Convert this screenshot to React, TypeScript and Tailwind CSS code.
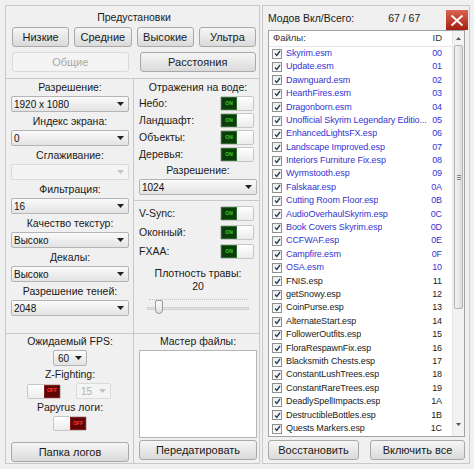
import React from "react";

const MODS: [string, string, boolean][] = [
  ["Skyrim.esm", "00", true],
  ["Update.esm", "01", true],
  ["Dawnguard.esm", "02", true],
  ["HearthFires.esm", "03", true],
  ["Dragonborn.esm", "04", true],
  ["Unofficial Skyrim Legendary Editio...", "05", true],
  ["EnhancedLightsFX.esp", "06", true],
  ["Landscape Improved.esp", "07", true],
  ["Interiors Furniture Fix.esp", "08", true],
  ["Wyrmstooth.esp", "09", true],
  ["Falskaar.esp", "0A", true],
  ["Cutting Room Floor.esp", "0B", true],
  ["AudioOverhaulSkyrim.esp", "0C", true],
  ["Book Covers Skyrim.esp", "0D", true],
  ["CCFWAF.esp", "0E", true],
  ["Campfire.esm", "0F", true],
  ["OSA.esm", "10", true],
  ["FNIS.esp", "11", false],
  ["getSnowy.esp", "12", false],
  ["CoinPurse.esp", "13", false],
  ["AlternateStart.esp", "14", false],
  ["FollowerOutfits.esp", "15", false],
  ["FloraRespawnFix.esp", "16", false],
  ["Blacksmith Chests.esp", "17", false],
  ["ConstantLushTrees.esp", "18", false],
  ["ConstantRareTrees.esp", "19", false],
  ["DeadlySpellImpacts.esp", "1A", false],
  ["DestructibleBottles.esp", "1B", false],
  ["Quests Markers.esp", "1C", false],
];

const LEFT_SELECTS: [string, string, boolean][] = [
  ["Разрешение:", "1920 x 1080", false],
  ["Индекс экрана:", "0", false],
  ["Сглаживание:", "", true],
  ["Фильтрация:", "16", false],
  ["Качество текстур:", "Высоко", false],
  ["Декалы:", "Высоко", false],
  ["Разрешение теней:", "2048", false],
];

function Btn({ children, className = "", disabled = false }: { children: React.ReactNode; className?: string; disabled?: boolean }) {
  return (
    <div
      className={`flex h-[20px] items-center justify-center rounded-[3px] border text-[11px] ${
        disabled
          ? "border-[#dadada] bg-[#f4f4f4] text-[#a8a8a8]"
          : "border-[#a9a9a9] bg-gradient-to-b from-[#f6f6f6] to-[#dadada] text-[#1a1a1a]"
      } ${className}`}
    >
      {children}
    </div>
  );
}

function Arrow({ light = false }: { light?: boolean }) {
  return (
    <svg width="7" height="4" viewBox="0 0 7 4" className="shrink-0">
      <path d="M0 0h7L3.5 4z" fill={light ? "#c4c4c4" : "#222"} />
    </svg>
  );
}

function Select({ value, className = "", disabled = false }: { value: string; className?: string; disabled?: boolean }) {
  return (
    <div
      className={`flex h-[16px] items-center justify-between rounded-[2px] border pl-[2px] pr-[4px] text-[10px] ${
        disabled
          ? "border-[#dadada] bg-[#f4f4f4] text-[#b0b0b0]"
          : "border-[#b4b4b4] bg-gradient-to-b from-[#fafafa] to-[#e3e3e3] text-[#111]"
      } ${className}`}
    >
      <span>{value}</span>
      <Arrow light={disabled} />
    </div>
  );
}

function Toggle({ on }: { on: boolean }) {
  const knob = <div className="h-full w-[17px] bg-gradient-to-b from-[#ffffff] to-[#ebebeb]" />;
  return (
    <div className="flex h-[15px] w-[34px] shrink-0 overflow-hidden rounded-[2px] border border-[#c6c6c6]">
      {on ? (
        <>
          <div className="flex h-full w-[17px] items-center justify-center border border-[#2a6a2a] bg-[#0b3d0b] text-[5px] font-bold text-[#3fc93f]">ON</div>
          {knob}
        </>
      ) : (
        <>
          {knob}
          <div className="flex h-full w-[17px] items-center justify-center border border-[#8a1a1a] bg-[#5e0505] text-[5px] font-bold text-[#ff3a3a]">OFF</div>
        </>
      )}
    </div>
  );
}

function Label({ children, className = "" }: { children: React.ReactNode; className?: string }) {
  return <div className={`flex h-[16px] items-center justify-center whitespace-nowrap text-[10.5px] text-[#1a1a1a] ${className}`}>{children}</div>;
}

function ToggleRow({ label }: { label: string }) {
  return (
    <div className="flex h-[15px] items-center justify-between pr-[3px] text-[10.5px] text-[#1a1a1a]">
      <span>{label}</span>
      <Toggle on />
    </div>
  );
}

function Check() {
  return (
    <div className="flex h-[10px] w-[10px] shrink-0 items-center justify-center border border-[#8e8f8f] bg-gradient-to-b from-[#ececec] to-[#ffffff]">
      <svg width="7" height="7" viewBox="0 0 7 7">
        <path d="M1 3.5l1.8 2L6 1" fill="none" stroke="#2a3b5c" strokeWidth="1.3" />
      </svg>
    </div>
  );
}

export default function App() {
  return (
    <div
      className="flex h-[469px] w-[474px] gap-[2px] bg-[#f0f0f0] py-[5px] pl-[5px] pr-[4px]"
      style={{ fontFamily: '"Liberation Sans", Arial, sans-serif' }}
    >
      {/* left panel */}
      <div className="flex w-[255px] shrink-0 flex-col border border-[#c9c9c9]">
        <div className="flex h-[72px] flex-col pl-[6px] pr-[3px] pt-[5px]">
          <div className="flex h-[14px] items-center justify-center text-[10.5px] text-[#1a1a1a]">Предустановки</div>
          <div className="mt-[2px] grid grid-cols-4 gap-[5px]">
            <Btn>Низкие</Btn>
            <Btn>Средние</Btn>
            <Btn>Высокие</Btn>
            <Btn>Ультра</Btn>
          </div>
          <div className="mt-[5px] grid grid-cols-2 gap-[11px]">
            <Btn disabled>Общие</Btn>
            <Btn>Расстояния</Btn>
          </div>
        </div>

        <div className="flex h-[255px] border-t border-[#c9c9c9]">
          <div className="flex w-[128px] flex-col gap-[2px] border-r border-[#c9c9c9] pl-[5px] pr-[4px] pt-[1px]">
            {LEFT_SELECTS.map(([l, v, d]) => (
              <div key={l} className="flex flex-col">
                <Label>{l}</Label>
                <Select value={v} disabled={d} />
              </div>
            ))}
          </div>
          <div className="flex flex-1 flex-col">
            <div className="flex flex-col pl-[5px] pr-[2px] pt-[1px]">
              <Label>Отражения на воде:</Label>
              <div className="flex flex-col gap-[2px]">
                <ToggleRow label="Небо:" />
                <ToggleRow label="Ландшафт:" />
                <ToggleRow label="Объекты:" />
                <ToggleRow label="Деревья:" />
              </div>
              <Label className="mt-[1px]">Разрешение:</Label>
              <Select value="1024" />
            </div>
            <div className="mt-[5px] flex flex-1 flex-col border-t border-[#c9c9c9] pl-[5px] pr-[2px] pt-[5px]">
              <div className="flex flex-col gap-[4px]">
                <ToggleRow label="V-Sync:" />
                <ToggleRow label="Оконный:" />
                <ToggleRow label="FXAA:" />
              </div>
              <Label className="mt-[7px]">Плотность травы:</Label>
              <Label className="-mt-[3px]">20</Label>
              <div className="relative mx-[8px] mt-[1px] h-[20px]">
                <div className="absolute left-[2px] right-[2px] top-[3px] border-t border-dotted border-[#c4c4c4]" />
                <div className="absolute left-0 right-0 top-[11px] h-[3px] border border-[#cfcfcf] bg-[#e6e6e6]" />
                <div className="absolute left-[8px] top-[4px] h-[14px] w-[8px] rounded-b-[4px] rounded-t-[2px] border border-[#9a9a9a] bg-gradient-to-b from-[#fbfbfb] to-[#e0e0e0]" />
              </div>
            </div>
          </div>
        </div>

        <div className="flex flex-1 border-t border-[#c9c9c9]">
          <div className="flex w-[128px] flex-col items-center border-r border-[#c9c9c9] pl-[5px] pr-[4px]">
            <Label>Ожидаемый FPS:</Label>
            <Select value="60" className="w-[34px] pl-[4px]" />
            <Label className="mt-[1px]">Z-Fighting:</Label>
            <div className="flex items-center gap-[15px] pr-[2px]">
              <Toggle on={false} />
              <Select value="15" disabled className="w-[35px] pl-[4px]" />
            </div>
            <Label className="mt-[1px]">Papyrus логи:</Label>
            <Toggle on={false} />
            <Btn className="mt-[11px] w-full">Папка логов</Btn>
          </div>
          <div className="flex flex-1 flex-col pl-[5px] pr-[2px]">
            <Label>Мастер файлы:</Label>
            <div className="h-[88px] border border-[#b5b5b5] bg-white" />
            <Btn className="mt-[2px]">Передатировать</Btn>
          </div>
        </div>
      </div>

      {/* right panel */}
      <div className="flex min-w-0 flex-1 flex-col border border-[#c9c9c9] pl-[5px] pr-[4px]">
        <div className="flex h-[24px] items-center text-[10.5px] text-[#1a1a1a]">
          <span className="pt-[2px]">Модов Вкл/Всего:</span>
          <span className="ml-[34px] pt-[2px]">67 / 67</span>
          <div className="ml-auto mr-[-3px] mt-[4px] flex h-[20px] w-[22px] items-center justify-center bg-gradient-to-b from-[#db6350] to-[#a51b0f]">
            <svg width="14" height="13" viewBox="0 0 14 13">
              <path d="M1.5 1.5l11 10M12.5 1.5l-11 10" stroke="#fff" strokeWidth="1.8" />
            </svg>
          </div>
        </div>
        <div className="flex h-[407px] border border-[#9ea3a8] bg-white">
          <div className="flex min-w-0 flex-1 flex-col">
            <div className="flex h-[16px] items-center border-b border-[#e6e6e6] pl-[4px] pr-[10px] text-[9.5px] text-[#333]">
              <span>Файлы:</span>
              <span className="ml-auto">ID</span>
            </div>
            {MODS.map(([name, id, blue]) => (
              <div
                key={id}
                className={`flex h-[13.4px] items-center pl-[3px] pr-[10px] text-[9px] tracking-[-0.1px] ${blue ? "text-[#3434d2]" : "text-[#222]"}`}
              >
                <Check />
                <span className="ml-[4px] overflow-hidden whitespace-nowrap">{name}</span>
                <span className="ml-auto w-[14px] shrink-0 text-right">{id}</span>
              </div>
            ))}
          </div>
          <div className="flex w-[12px] flex-col items-center border-l border-[#e8e8e8] bg-[#f2f2f2]">
            <svg width="5" height="3" viewBox="0 0 5 3" className="mt-[6px]">
              <path d="M0 3L2.5 0 5 3z" fill="#555" />
            </svg>
            <div className="mt-[5px] flex h-[264px] w-[9px] items-center justify-center rounded-[2px] border border-[#b3b3b3] bg-gradient-to-r from-[#f3f3f3] to-[#dcdcdc]">
              <div className="flex flex-col gap-[1px]">
                <div className="h-[1px] w-[4px] bg-[#888]" />
                <div className="h-[1px] w-[4px] bg-[#888]" />
                <div className="h-[1px] w-[4px] bg-[#888]" />
              </div>
            </div>
            <svg width="5" height="3" viewBox="0 0 5 3" className="mb-[10px] mt-auto">
              <path d="M0 0L2.5 3 5 0z" fill="#555" />
            </svg>
          </div>
        </div>
        <div className="mt-[3px] flex gap-[11px]">
          <Btn className="w-[91px]">Восстановить</Btn>
          <Btn className="flex-1">Включить все</Btn>
        </div>
      </div>
    </div>
  );
}
